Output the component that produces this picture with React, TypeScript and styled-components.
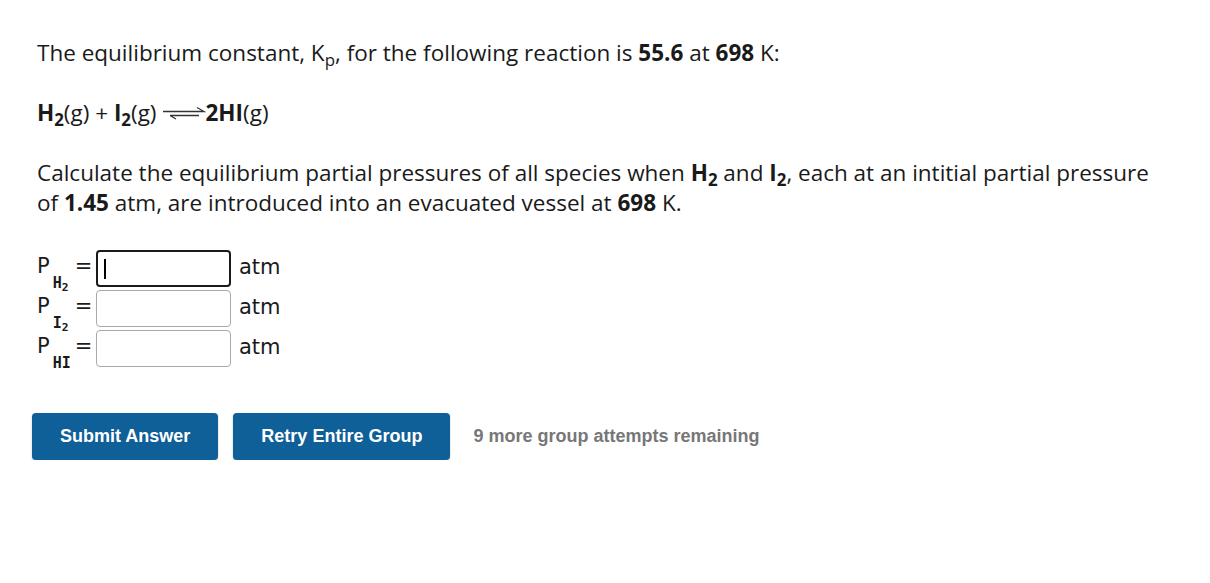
import styled, { createGlobalStyle } from 'styled-components';

const GlobalStyle = createGlobalStyle`
  body {
    margin: 0;
    background: #ffffff;
    font-family: 'Open Sans', sans-serif;
    color: #1a1a1a;
  }
`;

const Page = styled.div`
  padding: 38px 0 0 37px;
  width: 1135px;
`;

const Para = styled.p`
  margin: 0;
  font-size: 22.5px;
  line-height: 30px;
  color: #1a1a1a;
`;

const Intro = styled(Para)`
  margin-bottom: 30px;
`;

const Equation = styled(Para)`
  display: flex;
  align-items: center;
  margin-bottom: 30px;
`;

const Question = styled(Para)`
  margin-bottom: 32px;
`;

const Sub = styled.sub`
  font-size: 0.75em;
  vertical-align: -0.3em;
  line-height: 0;
`;

const Arrow = styled.svg`
  width: 44px;
  height: 14px;
  margin: 0 0 0 5px;
`;

const Inputs = styled.div`
  display: flex;
  flex-direction: column;
  gap: 3px;
`;

const Row = styled.div`
  display: flex;
  align-items: center;
  height: 37px;
`;

const Label = styled.div`
  display: flex;
  align-items: flex-start;
  width: 59px;
  font-family: 'DejaVu Sans', sans-serif;
  font-size: 21px;
  color: #1a1a1a;
  height: 37px;
`;

const LabelP = styled.span`
  margin-top: 4px;
`;

const LabelSub = styled.span`
  font-family: 'DejaVu Sans Mono', monospace;
  font-weight: bold;
  font-size: 15px;
  line-height: 15px;
  margin-top: 26px;
  margin-left: 3px;
  width: 23px;
  flex-shrink: 0;
  white-space: nowrap;
`;

const Eq = styled.span`
  margin-top: 4px;
  margin-left: -1px;
`;

const Field = styled.div<{ $active?: boolean }>`
  width: 135px;
  height: 37px;
  box-sizing: border-box;
  border: ${(p) => (p.$active ? '2px solid #1a1a1a' : '1px solid #a9a9a9')};
  border-radius: 4px;
  background: #fff;
  display: flex;
  align-items: center;
  padding-left: ${(p) => (p.$active ? '6px' : '7px')};
`;

const Caret = styled.span`
  width: 2px;
  height: 20px;
  background: #000;
`;

const Unit = styled.span`
  font-family: 'DejaVu Sans', sans-serif;
  font-size: 21px;
  margin-left: 8px;
  margin-top: -4px;
  color: #1a1a1a;
`;

const Actions = styled.div`
  display: flex;
  align-items: center;
  gap: 15px;
  margin: 46px 0 0 -5px;
`;

const Button = styled.button`
  height: 47px;
  padding: 0 28px;
  border: none;
  border-radius: 4px;
  background: #0f5f98;
  color: #ffffff;
  font-family: 'Liberation Sans', Arial, sans-serif;
  font-weight: bold;
  font-size: 18px;
  box-shadow: 0 1px 2px rgba(0, 0, 0, 0.25);
`;

const Remaining = styled.span`
  font-family: 'Liberation Sans', Arial, sans-serif;
  font-weight: bold;
  font-size: 18px;
  color: #777777;
  margin-left: 8px;
`;

const fields = [
  { sub: <>H<Sub>2</Sub></>, active: true },
  { sub: <>I<Sub>2</Sub></>, active: false },
  { sub: <>HI</>, active: false },
];

export default function App() {
  return (
    <Page>
      <GlobalStyle />
      <Intro>
        The equilibrium constant, K<Sub>p</Sub>, for the following reaction is <b>55.6</b> at{' '}
        <b>698</b> K:
      </Intro>
      <Equation>
        <span>
          <b>H</b>
          <b><Sub>2</Sub></b>(g) + <b>I</b>
          <b><Sub>2</Sub></b>(g)
        </span>
        <Arrow viewBox="0 0 44 14">
          <path d="M1 5.5 H42 L35 1.5" fill="none" stroke="#333" strokeWidth="1.3" />
          <path d="M8 9.5 H37 M8 9.5 L14 13" fill="none" stroke="#333" strokeWidth="1.3" />
        </Arrow>
        <span>
          <b>2HI</b>(g)
        </span>
      </Equation>
      <Question>
        Calculate the equilibrium partial pressures of all species when <b>H<Sub>2</Sub></b> and{' '}
        <b>I<Sub>2</Sub></b>, each at an intitial partial pressure of <b>1.45</b> atm, are
        introduced into an evacuated vessel at <b>698</b> K.
      </Question>
      <Inputs>
        {fields.map((f, i) => (
          <Row key={i}>
            <Label>
              <LabelP>P</LabelP>
              <LabelSub>{f.sub}</LabelSub>
              <Eq>=</Eq>
            </Label>
            <Field $active={f.active}>{f.active && <Caret />}</Field>
            <Unit>atm</Unit>
          </Row>
        ))}
      </Inputs>
      <Actions>
        <Button>Submit Answer</Button>
        <Button>Retry Entire Group</Button>
        <Remaining>9 more group attempts remaining</Remaining>
      </Actions>
    </Page>
  );
}
